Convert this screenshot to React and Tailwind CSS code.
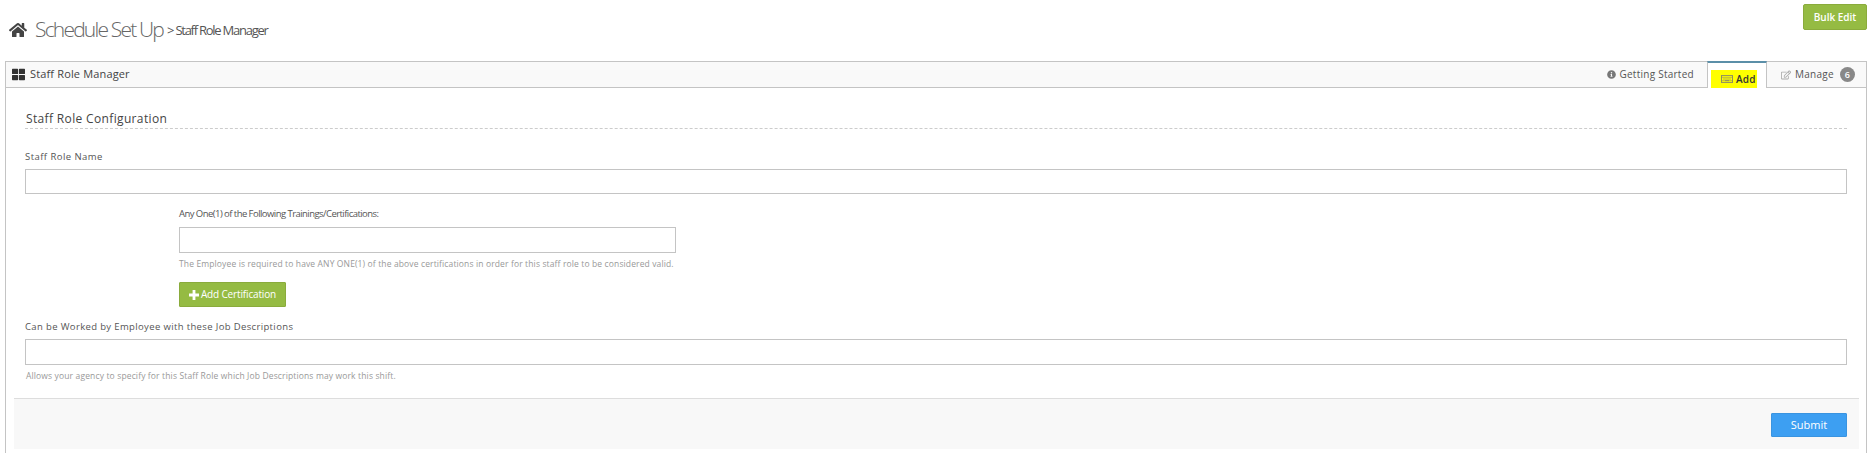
import { FaHome, FaInfoCircle, FaRegEdit, FaRegKeyboard, FaThLarge } from 'react-icons/fa';

export default function App() {
  return (
    <div className="h-[453px] overflow-hidden bg-white font-['Open_Sans',sans-serif] text-[#333]">
      {/* page title */}
      <div className="flex h-[61px] justify-between pl-[9px] pr-[8px]">
        <div className="flex h-[60px] items-center">
          <FaHome className="mr-[8px] text-[18px] text-[#444]" />
          <span className="text-[21px] font-light tracking-[-1.8px] text-[#666]">Schedule Set Up</span>
          <span className="ml-[4px] mt-[2px] text-[13px] tracking-[-1.25px] text-[#555]">&gt; Staff Role Manager</span>
        </div>
        <button className="mt-[4px] h-[26px] w-[64px] rounded-[2px] border border-[#8aab3c] bg-[#95bb43] text-[10px] font-semibold text-white">
          Bulk Edit
        </button>
      </div>

      <div className="mx-[5px] mr-[8px]">
        {/* panel header */}
        <div className="flex h-[27px] items-stretch justify-between border border-[#c4c4c4] bg-[#f9f9f9] pl-[6px]">
          <div className="flex items-center text-[11px] tracking-[0.15px] text-[#444]">
            <FaThLarge className="mr-[5px] text-[13px] text-[#333]" />
            Staff Role Manager
          </div>
          <div className="flex items-stretch text-[10px] tracking-[0.3px]">
            <div className="mr-[13px] flex items-center tracking-[0.25px] text-[#555]">
              <FaInfoCircle className="mr-[3px] text-[9px] text-[#777]" />
              Getting Started
            </div>
            <div className="relative z-10 -mb-px -mt-px flex w-[60px] items-end border-x border-[#c4c4c4] border-t-2 border-t-[#5b8fa8] bg-white pl-[3px]">
              <div className="flex h-[18px] w-[46px] items-center bg-[#ffff00] pl-[10px] font-semibold text-[#333]">
                <FaRegKeyboard className="mr-[3px] text-[12px] text-[#777]" />
                Add
              </div>
            </div>
            <div className="flex items-center pl-[14px] pr-[11px] text-[#555]">
              <FaRegEdit className="mr-[4px] text-[10px] text-[#aaa]" />
              Manage
              <span className="ml-[6px] flex size-[15px] items-center justify-center rounded-full bg-[#888] text-[9px] font-semibold text-white">
                6
              </span>
            </div>
          </div>
        </div>

        {/* panel body */}
        <div className="h-[365px] border-x border-[#c4c4c4] pl-[8px] pr-[7px] pt-[21px]">
          <div className="pl-[11px] pr-[12px]">
            <h3 className="h-[20px] border-b border-dashed border-[#ccc] pl-px text-[12px] leading-[20px] tracking-[0.35px] text-[#444]">
              Staff Role Configuration
            </h3>
            <label className="mt-[21px] block text-[9.5px] leading-[14px] tracking-[0.45px] text-[#555]">Staff Role Name</label>
            <input className="mt-[5px] block h-[25px] w-full border border-[#c4c4c4] bg-white" />

            <div className="ml-[154px] w-[497px]">
              <label className="mt-[13px] block whitespace-nowrap text-[9.5px] leading-[14px] tracking-[-0.55px] text-[#555]">
                Any One(1) of the Following Trainings/Certifications:
              </label>
              <input className="mt-[6px] block h-[26px] w-full border border-[#c4c4c4] bg-white" />
              <p className="mt-[4px] whitespace-nowrap text-[8.5px] leading-[14px] tracking-[0.13px] text-[#999]">
                The Employee is required to have ANY ONE(1) of the above certifications in order for this staff role to be considered valid.
              </p>
              <button className="mt-[11px] flex h-[25px] w-[107px] items-center justify-center rounded-[1px] border border-[#8aab3c] bg-[#95bb43] text-[10px] tracking-[-0.15px] text-white">
                <svg viewBox="0 0 10 10" className="mr-[2px] size-[10px] fill-current">
                  <path d="M3.6 0h2.8v3.6H10v2.8H6.4V10H3.6V6.4H0V3.6h3.6z" />
                </svg>
                Add Certification
              </button>
            </div>

            <label className="mt-[13px] block text-[9.5px] leading-[14px] tracking-[0.36px] text-[#555]">
              Can be Worked by Employee with these Job Descriptions
            </label>
            <input className="mt-[5px] block h-[26px] w-full border border-[#c4c4c4] bg-white" />
            <p className="mt-[4px] pl-px text-[8.5px] leading-[14px] tracking-[0.14px] text-[#999]">
              Allows your agency to specify for this Staff Role which Job Descriptions may work this shift.
            </p>
          </div>

          {/* footer */}
          <div className="mt-[15px] flex h-[51px] items-start justify-end border-t border-[#ddd] bg-[#f8f8f8] pr-[12px] pt-[14px]">
            <button className="h-[24px] w-[76px] rounded-[1px] border border-[#3a94e0] bg-[#3d9ff2] text-[11px] text-white">
              Submit
            </button>
          </div>
        </div>
      </div>
    </div>
  );
}
